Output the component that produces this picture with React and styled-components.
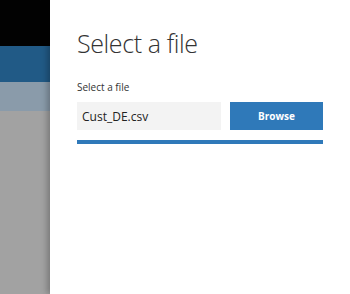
import React from 'react';
import styled, { createGlobalStyle } from 'styled-components';

const GlobalStyle = createGlobalStyle`
  html, body {
    margin: 0;
    padding: 0;
    background: #ffffff;
  }
  body {
    font-family: 'Open Sans', 'Noto Sans', sans-serif;
  }
`;

const Screen = styled.div`
  display: flex;
  width: 350px;
  height: 294px;
  overflow: hidden;
`;

const Backdrop = styled.div`
  display: flex;
  flex-direction: column;
  width: 50px;
  flex-shrink: 0;
  background: #a2a2a2;
`;

const Band = styled.div`
  height: ${({ h }) => h}px;
  background: ${({ color }) => color};
`;

const Panel = styled.section`
  flex: 1;
  display: flex;
  flex-direction: column;
  padding: 27px 27px 0 27px;
  background: #ffffff;
  box-shadow: -3px 0 6px rgba(0, 0, 0, 0.25);
  position: relative;
`;

const Title = styled.h1`
  margin: 0;
  font-size: 25px;
  font-weight: 300;
  color: #333333;
  letter-spacing: -0.4px;
  line-height: 32px;
`;

const Label = styled.label`
  margin-top: 21px;
  font-size: 10px;
  color: #333333;
  line-height: 14px;
`;

const Row = styled.div`
  display: flex;
  gap: 9px;
  margin-top: 8px;
`;

const Input = styled.div`
  width: 144px;
  height: 28px;
  box-sizing: border-box;
  padding: 0 5px;
  background: #f3f3f3;
  display: flex;
  align-items: center;
  font-size: 12px;
  color: #222222;
`;

const Button = styled.button`
  width: 93px;
  height: 28px;
  border: none;
  background: #2f79b9;
  color: #ffffff;
  font-family: 'Open Sans', sans-serif;
  font-size: 10px;
  font-weight: 700;
  padding: 0;
`;

const Progress = styled.div`
  margin-top: 10px;
  width: 246px;
  height: 4px;
  background: #2f79b9;
`;

const App = () => {
  return (
    <>
      <GlobalStyle />
      <Screen>
        <Backdrop>
          <Band h={46} color='#020202' />
          <Band h={36} color='#215a86' />
          <Band h={29} color='#8a9baa' />
        </Backdrop>
        <Panel>
          <Title>Select a file</Title>
          <Label>Select a file</Label>
          <Row>
            <Input>Cust_DE.csv</Input>
            <Button>Browse</Button>
          </Row>
          <Progress />
        </Panel>
      </Screen>
    </>
  );
};

export default App;
